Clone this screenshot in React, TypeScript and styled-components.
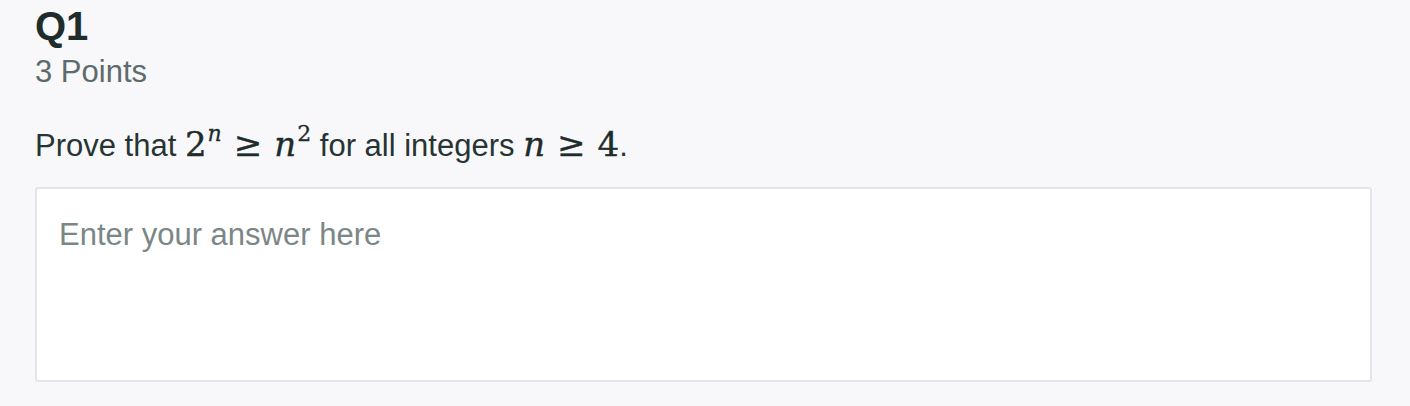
import React from 'react';
import styled, { createGlobalStyle } from 'styled-components';

const Global = createGlobalStyle`
  html, body { margin: 0; padding: 0; background: #f8f8fa; }
  body { font-family: "Liberation Sans", Arial, sans-serif; }
`;

const Page = styled.main`
  display: flex;
  flex-direction: column;
  box-sizing: border-box;
  min-height: 406px;
  padding: 4px 38px 0 35px;
`;

const Title = styled.h1`
  margin: 0;
  font-size: 40px;
  line-height: 44px;
  font-weight: 700;
  color: #1f2c2c;
`;

const Points = styled.div`
  margin-top: 6px;
  font-size: 31px;
  line-height: 36px;
  color: #5e6b6c;
`;

const Prompt = styled.p`
  margin: 38px 0 0;
  font-size: 31px;
  line-height: 36px;
  color: #273434;
`;

const Math = styled.span`
  font-family: "DejaVu Serif", "Liberation Serif", serif;
  font-size: 34px;
  line-height: 0;
  color: #1f2c2c;
  -webkit-text-stroke: 0.4px #1f2c2c;
`;

const Var = styled.span`
  font-style: italic;
`;

const Sup = styled.span`
  font-size: 22px;
  line-height: 0;
  vertical-align: 15px;
  margin-left: 1px;
  -webkit-text-stroke: 0.3px #1f2c2c;
`;

const Rel = styled.span`
  margin: 0 12px;
`;

const AnswerBox = styled.div`
  margin-top: 23px;
  box-sizing: border-box;
  height: 195px;
  padding: 28px 22px;
  background: #ffffff;
  border: 2px solid #e2e5e9;
  border-radius: 3px;
  font-size: 31px;
  line-height: 36px;
`;

const Placeholder = styled.span`
  color: #7b8787;
`;

export default function App() {
  return (
    <>
      <Global />
      <Page>
        <Title>Q1</Title>
        <Points>3 Points</Points>
        <Prompt>
          Prove that{' '}
          <Math>
            2<Sup><Var>n</Var></Sup>
            <Rel>≥</Rel>
            <Var>n</Var><Sup>2</Sup>
          </Math>{' '}
          for all integers{' '}
          <Math>
            <Var>n</Var>
            <Rel>≥</Rel>4
          </Math>
          .
        </Prompt>
        <AnswerBox>
          <Placeholder>Enter your answer here</Placeholder>
        </AnswerBox>
      </Page>
    </>
  );
}
